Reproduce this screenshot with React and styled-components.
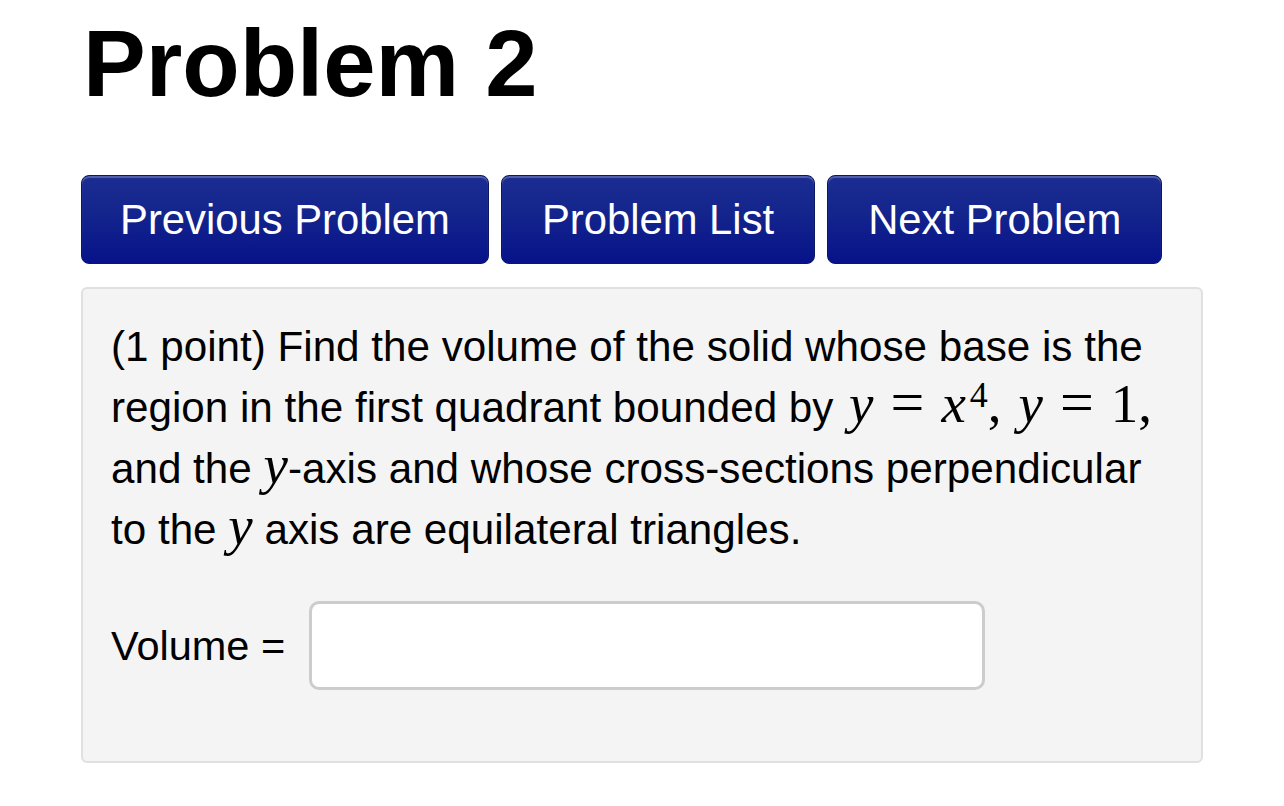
import React from "react";
import styled, { createGlobalStyle } from "styled-components";

const GlobalStyle = createGlobalStyle`
  html, body {
    margin: 0;
    padding: 0;
    background: #fff;
    overflow: hidden;
  }
  body {
    font-family: "Liberation Sans", Arial, Helvetica, sans-serif;
    color: #000;
  }
`;

const Page = styled.div`
  width: 1122px;
  padding-left: 81px;
  display: flex;
  flex-direction: column;
`;

const Heading = styled.h1`
  margin: 7px 0 0 2px;
  font-size: 94px;
  font-weight: bold;
  line-height: 113px;
  white-space: nowrap;
`;

const NavRow = styled.div`
  display: flex;
  gap: 12px;
  margin-top: 55px;
`;

const NavButton = styled.button`
  height: 89px;
  padding: 0 ${({ pad }) => pad || 40}px;
  border: 1px solid #0b1763;
  border-radius: 8px;
  background: linear-gradient(to bottom, #1b2c92 0%, #13248c 45%, #07128a 100%);
  box-shadow: inset 0 2px 1px rgba(255, 255, 255, 0.25);
  color: #fff;
  font-family: "Liberation Sans", Arial, Helvetica, sans-serif;
  font-size: 41.8px;
  cursor: pointer;
`;

const Panel = styled.div`
  margin-top: 23px;
  background: #f4f4f4;
  border: 2px solid #e0e0e0;
  border-radius: 6px;
  padding: 27px 28px 71px;
`;

const Question = styled.p`
  margin: 0;
  font-size: 42.2px;
  line-height: 61px;
`;

const M = styled.span`
  font-family: "Liberation Serif", "Times New Roman", serif;
  font-style: ${({ upright }) => (upright ? "normal" : "italic")};
  font-size: 55px;
  line-height: 0.75;
  margin-left: ${({ before }) => before || 0}px;
  margin-right: ${({ after }) => after || 0}px;
`;

const Op = styled.span`
  font-family: "Liberation Serif", "Times New Roman", serif;
  font-size: 60px;
  line-height: 0.75;
  margin: 0 17px;
`;

const Sup = styled.sup`
  font-family: "Liberation Serif", "Times New Roman", serif;
  font-size: 36px;
  line-height: 0;
  margin-left: 4px;
`;

const AnswerRow = styled.div`
  display: flex;
  align-items: center;
  gap: 24px;
  margin-top: 41px;
`;

const Label = styled.label`
  font-size: 41.5px;
`;

const AnswerInput = styled.input`
  width: 670px;
  height: 83px;
  box-sizing: content-box;
  border: 3px solid #cccccc;
  border-radius: 10px;
  background: #fff;
  padding: 0;
  font-size: 36px;
`;

export default function App() {
  return (
    <>
      <GlobalStyle />
      <Page>
        <Heading>Problem 2</Heading>
        <NavRow>
          <NavButton pad={38}>Previous Problem</NavButton>
          <NavButton>Problem List</NavButton>
          <NavButton>Next Problem</NavButton>
        </NavRow>
        <Panel>
          <Question>
            (1 point) Find the volume of the solid whose base is the
            <br />
            region in the first quadrant bounded by <M before={4}>y</M>
            <Op>=</Op>
            <M>x</M>
            <Sup>4</Sup>
            <M upright after={17}>,</M>
            <M>y</M>
            <Op>=</Op>
            <M upright>1,</M>
            <br />
            and the <M>y</M>-axis and whose cross-sections perpendicular
            <br />
            to the <M>y</M> axis are equilateral triangles.
          </Question>
          <AnswerRow>
            <Label htmlFor="volume">Volume =</Label>
            <AnswerInput id="volume" type="text" />
          </AnswerRow>
        </Panel>
      </Page>
    </>
  );
}
